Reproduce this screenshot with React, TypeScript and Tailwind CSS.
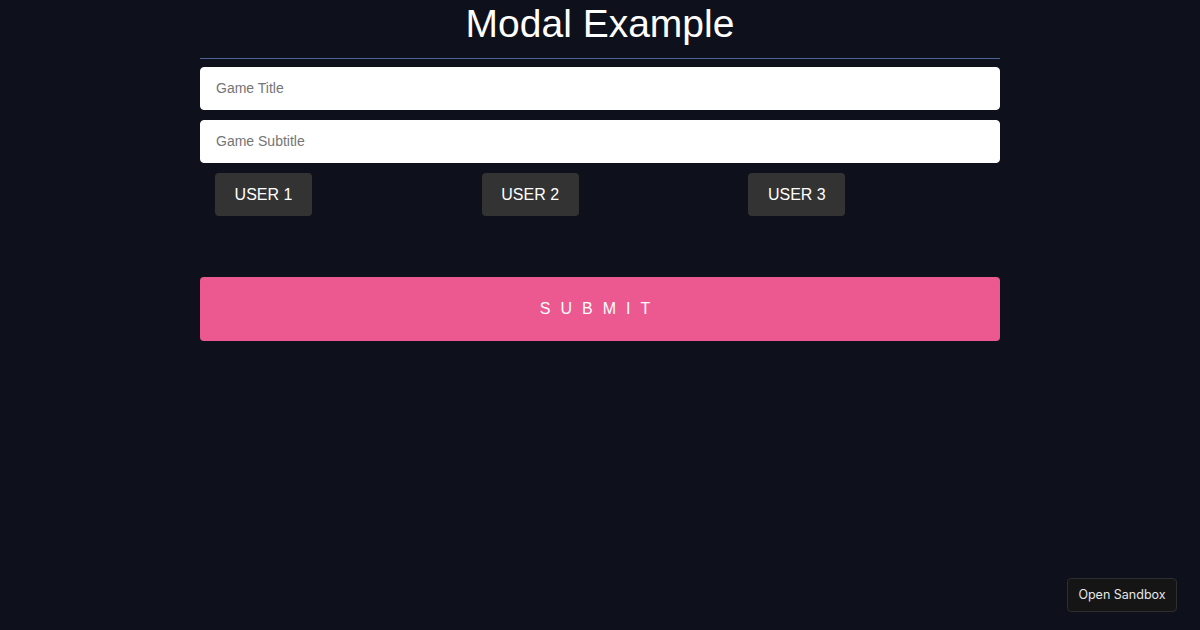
import React from "react";

const users = ["USER 1", "USER 2", "USER 3"];

export default function App() {
  return (
    <div className="min-h-[630px] bg-[#0e101c] font-['Liberation_Sans',Arial,sans-serif]">
      <div className="mx-auto w-[800px]">
        <h1 className="border-b border-[#4f6294] pb-[10px] text-center text-[39px] leading-[48px] font-thin text-white">
          Modal Example
        </h1>

        <form className="mt-[8px] flex flex-col">
          <input
            placeholder="Game Title"
            className="mb-[10px] block h-[43px] w-full rounded-[4px] border border-white bg-white px-[15px] pb-[2px] text-[14px] text-black placeholder:text-[#757575]"
          />
          <input
            placeholder="Game Subtitle"
            className="mb-[10px] block h-[43px] w-full rounded-[4px] border border-white bg-white px-[15px] pb-[2px] text-[14px] text-black placeholder:text-[#757575]"
          />

          <div className="grid grid-cols-3">
            {users.map((u) => (
              <div key={u} className="px-[15px]">
                <button
                  type="button"
                  className="flex h-[43px] w-[97px] items-center justify-center rounded-[4px] bg-[#333333] text-[16px] text-white"
                >
                  {u}
                </button>
              </div>
            ))}
          </div>

          <button
            type="submit"
            className="mt-[61px] flex h-[64px] w-full items-center justify-center rounded-[4px] bg-[#ec5990] text-[16px] font-thin tracking-[10px] text-white uppercase"
          >
            Submit
          </button>
        </form>
      </div>

      <button className="fixed right-[23px] bottom-[18px] flex h-[34px] w-[110px] items-center justify-center rounded-[4px] border border-[#2e2e2e] bg-[#151515] font-['Inter',sans-serif] text-[12.5px] text-[#e6e6e6]">
        Open Sandbox
      </button>
    </div>
  );
}
